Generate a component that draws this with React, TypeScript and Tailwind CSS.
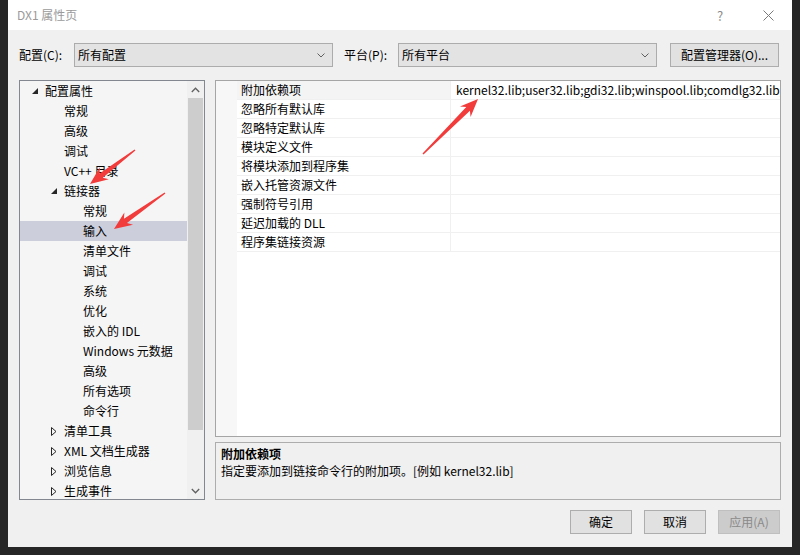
import React from "react";

type Node = { t: string; l: 0 | 1 | 2; e?: "open" | "closed"; sel?: boolean };

const tree: Node[] = [
  { t: "配置属性", l: 0, e: "open" },
  { t: "常规", l: 1 },
  { t: "高级", l: 1 },
  { t: "调试", l: 1 },
  { t: "VC++ 目录", l: 1 },
  { t: "链接器", l: 1, e: "open" },
  { t: "常规", l: 2 },
  { t: "输入", l: 2, sel: true },
  { t: "清单文件", l: 2 },
  { t: "调试", l: 2 },
  { t: "系统", l: 2 },
  { t: "优化", l: 2 },
  { t: "嵌入的 IDL", l: 2 },
  { t: "Windows 元数据", l: 2 },
  { t: "高级", l: 2 },
  { t: "所有选项", l: 2 },
  { t: "命令行", l: 2 },
  { t: "清单工具", l: 1, e: "closed" },
  { t: "XML 文档生成器", l: 1, e: "closed" },
  { t: "浏览信息", l: 1, e: "closed" },
  { t: "生成事件", l: 1, e: "closed" },
];

const indent = ["pl-[6px]", "pl-[25px]", "pl-[44px]"];

const props = [
  { n: "附加依赖项", v: "kernel32.lib;user32.lib;gdi32.lib;winspool.lib;comdlg32.lib;advapi32.lib;shell32.lib" },
  { n: "忽略所有默认库", v: "" },
  { n: "忽略特定默认库", v: "" },
  { n: "模块定义文件", v: "" },
  { n: "将模块添加到程序集", v: "" },
  { n: "嵌入托管资源文件", v: "" },
  { n: "强制符号引用", v: "" },
  { n: "延迟加载的 DLL", v: "" },
  { n: "程序集链接资源", v: "" },
];

// red annotation arrows drawn on top of the screenshot
const arrows = [
  [135, 150, 90, 184],
  [165, 193, 114, 229],
  [423, 154, 478, 99],
];

function arrowPts(x1: number, y1: number, x2: number, y2: number) {
  const dx = x2 - x1, dy = y2 - y1, L = Math.hypot(dx, dy);
  const ux = dx / L, uy = dy / L, nx = -uy, ny = ux;
  const hb = L - 16;
  const p = (d: number, w: number) => `${x1 + ux * d + nx * w},${y1 + uy * d + ny * w}`;
  return [p(0, 0.7), p(hb + 2, 2.6), p(hb - 2, 7.5), p(L, 0), p(hb - 2, -7.5), p(hb + 2, -2.6), p(0, -0.7)].join(" ");
}

function Chevron({ up = false }: { up?: boolean }) {
  return (
    <svg width="9" height="6" viewBox="0 0 9 6">
      <polyline
        points={up ? "0.8,5 4.5,1.2 8.2,5" : "0.8,1 4.5,4.8 8.2,1"}
        fill="none"
        stroke="#606060"
        strokeWidth="1.3"
      />
    </svg>
  );
}

function Combo({ text }: { text: string }) {
  return (
    <div className="flex h-[24px] w-[259px] shrink-0 items-center justify-between border border-[#acacac] bg-[#e3e3e3] pl-[3px] pr-[7px]">
      <span>{text}</span>
      <svg width="8" height="5" viewBox="0 0 8 5">
        <polyline points="0.5,0.5 4,4 7.5,0.5" fill="none" stroke="#606060" strokeWidth="1" />
      </svg>
    </div>
  );
}

export default function App() {
  return (
    <div className="relative h-[555px] w-[800px] overflow-hidden bg-[#262626] text-[12px] leading-none text-black font-['Noto_Sans_CJK_SC','Microsoft_YaHei',sans-serif]">
      <div className="ml-[8px] flex h-[547px] w-[784px] flex-col">
        {/* title bar */}
        <div className="flex h-[30px] shrink-0 items-center bg-white pl-[9px] pr-[18px]">
          <span className="text-[12px] text-[#9a9a9a]">DX1 属性页</span>
          <span className="ml-auto w-[10px] text-[13px] text-[#8a8a8a]">?</span>
          <svg className="ml-[36px]" width="11" height="11" viewBox="0 0 11 11">
            <path d="M0.5 0.5 L10.5 10.5 M10.5 0.5 L0.5 10.5" stroke="#7a7a7a" strokeWidth="1" />
          </svg>
        </div>

        <div className="flex flex-1 flex-col bg-[#f0f0f0] px-[11px] pt-[13px]">
          {/* configuration row */}
          <div className="flex h-[24px] shrink-0 items-center">
            <span className="w-[55px] shrink-0">配置(C):</span>
            <Combo text="所有配置" />
            <span className="ml-[11px] w-[54px] shrink-0">平台(P):</span>
            <Combo text="所有平台" />
            <button className="ml-auto mr-[2px] h-[24px] w-[109px] shrink-0 border border-[#adadad] bg-[#e1e1e1]">配置管理器(O)...</button>
          </div>

          {/* main area */}
          <div className="mt-[13px] flex h-[420px] shrink-0 gap-[10px]">
            <div className="flex w-[186px] shrink-0 overflow-hidden border border-[#828790] bg-[#f5f5f5]">
              <div className="w-[167px] shrink-0 overflow-hidden">
                {tree.map((n, i) => (
                  <div
                    key={i}
                    className={`flex h-[20px] shrink-0 items-center whitespace-nowrap ${indent[n.l]} ${n.sel ? "bg-[#cccedb]" : ""}`}
                  >
                    <div className="flex w-[19px] shrink-0 items-center pl-[6px]">
                      {n.e === "open" && (
                        <svg width="6" height="6" viewBox="0 0 6 6">
                          <polygon points="6,0 6,6 0,6" fill="#262626" />
                        </svg>
                      )}
                      {n.e === "closed" && (
                        <svg width="6" height="9" viewBox="0 0 6 9">
                          <polygon points="0.5,0.5 5,4.5 0.5,8.5" fill="none" stroke="#262626" strokeWidth="1" />
                        </svg>
                      )}
                    </div>
                    <span>{n.t}</span>
                  </div>
                ))}
              </div>
              <div className="flex w-[17px] shrink-0 flex-col bg-[#f0f0f0]">
                <div className="flex h-[17px] shrink-0 items-center justify-center">
                  <Chevron up />
                </div>
                <div className="mx-[1px] h-[332px] shrink-0 bg-[#cdcdcd]" />
                <div className="flex-1" />
                <div className="flex h-[17px] shrink-0 items-center justify-center">
                  <Chevron />
                </div>
              </div>
            </div>

            <div className="flex min-w-0 flex-1 flex-col gap-[5px]">
              {/* property grid */}
              <div className="flex h-[357px] shrink-0 border border-[#a5a5a5] bg-white">
                <div className="w-[21px] shrink-0 bg-[#f7f7f7]" />
                <div className="min-w-0 flex-1 overflow-hidden">
                  {props.map((p, i) => (
                    <div key={i} className="flex h-[19px] border-b border-[#f0f0f0]">
                      <div className={`flex w-[214px] shrink-0 items-center border-r border-[#f0f0f0] pl-[4px] ${i === 0 ? "bg-[#f4f4f4]" : ""}`}>
                        {p.n}
                      </div>
                      <div className="flex min-w-0 flex-1 items-center overflow-hidden whitespace-nowrap pl-[5px]">{p.v}</div>
                    </div>
                  ))}
                </div>
              </div>

              {/* description */}
              <div className="h-[58px] shrink-0 border border-[#adadad] bg-[#f0f0f0] px-[5px] pt-[2px] leading-[17px]">
                <div className="font-bold">附加依赖项</div>
                <div>指定要添加到链接命令行的附加项。[例如 kernel32.lib]</div>
              </div>
            </div>
          </div>

          {/* buttons */}
          <div className="mr-[1px] mt-[10px] flex justify-end gap-[12px]">
            <button className="h-[24px] w-[62px] border border-[#adadad] bg-[#e1e1e1]">确定</button>
            <button className="h-[24px] w-[62px] border border-[#adadad] bg-[#e1e1e1]">取消</button>
            <button className="h-[24px] w-[62px] border border-[#bfbfbf] bg-[#cccccc] text-[#8a8a8a]">应用(A)</button>
          </div>
        </div>
      </div>

      <svg className="pointer-events-none absolute left-0 top-0" width="800" height="555">
        {arrows.map((a, i) => (
          <polygon key={i} points={arrowPts(a[0], a[1], a[2], a[3])} fill="#f23b3b" />
        ))}
      </svg>
    </div>
  );
}
